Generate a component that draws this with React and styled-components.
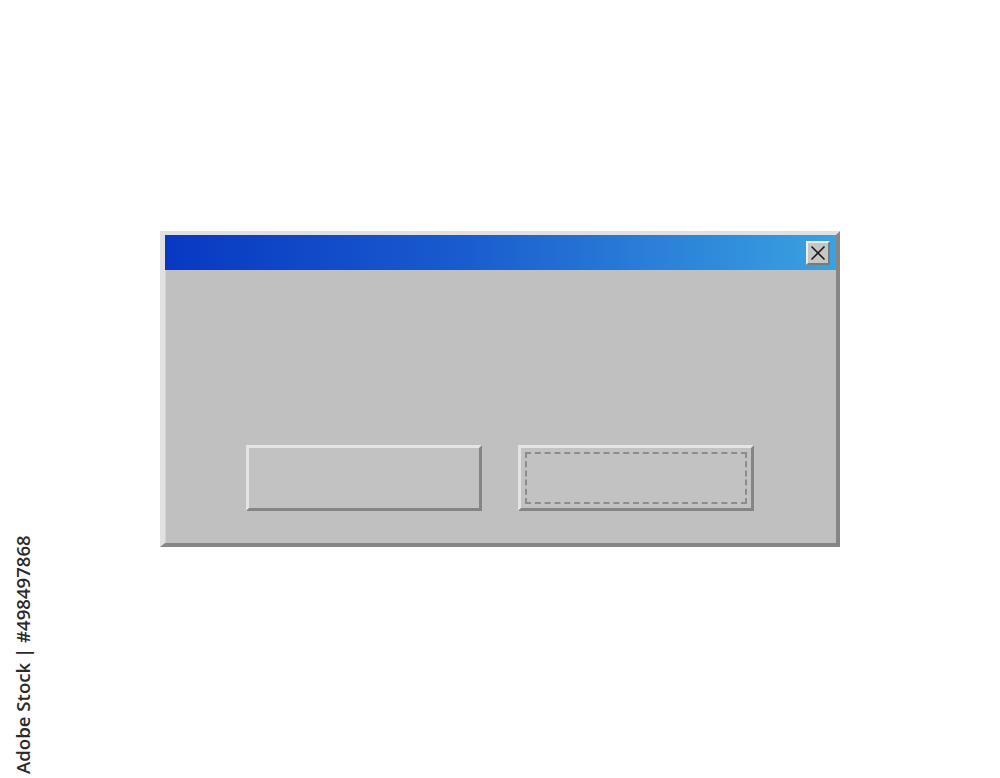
import React from "react";
import styled, { createGlobalStyle } from "styled-components";

const Global = createGlobalStyle`
  html, body {
    margin: 0;
    padding: 0;
    background: #ffffff;
    font-family: "Open Sans", "Liberation Sans", sans-serif;
  }
`;

const Page = styled.div`
  position: relative;
  width: 1000px;
  height: 778px;
  box-sizing: border-box;
  padding: 231px 0 0 160px;
  background: #ffffff;
  overflow: hidden;
`;

const Window = styled.div`
  width: 680px;
  height: 316px;
  box-sizing: border-box;
  display: flex;
  flex-direction: column;
  background: #c0c0c0;
  border-style: solid;
  border-width: 4px 4px 4px 5px;
  border-color: #e1e1e1 #868686 #868686 #e1e1e1;
  box-shadow: inset 1px 1px 0 #d2d2d2;
`;

const TitleBar = styled.div`
  height: 35px;
  flex: none;
  display: flex;
  align-items: flex-start;
  justify-content: flex-end;
  padding: 6px 6px 0 0;
  box-sizing: border-box;
  background: linear-gradient(90deg, #0838c2 0%, #1a5ccf 45%, #3aa2e0 100%);
`;

const CloseButton = styled.button`
  width: 24px;
  height: 24px;
  padding: 0;
  margin: 0;
  display: flex;
  align-items: center;
  justify-content: center;
  background: #c6c6c6;
  border-style: solid;
  border-width: 2px;
  border-color: #ececec #7a7a7a #7a7a7a #ececec;
  box-sizing: border-box;
  cursor: pointer;
`;

const Body = styled.div`
  flex: 1;
  display: flex;
  align-items: flex-end;
  justify-content: center;
  gap: 36px;
  padding: 0 1px 32px 0;
  box-sizing: border-box;
`;

const Button = styled.button`
  width: 236px;
  height: 66px;
  padding: 4px;
  margin: 0;
  box-sizing: border-box;
  background: #c2c2c2;
  border-style: solid;
  border-width: 3px;
  border-color: #e4e4e4 #858585 #858585 #e4e4e4;
  display: flex;
  cursor: pointer;
`;

const FocusRing = styled.span`
  flex: 1;
  border: ${(p) => (p.$visible ? "2px dashed #8c8c8c" : "none")};
`;

const StockId = styled.div`
  position: absolute;
  left: 11px;
  top: 532px;
  height: 242px;
  width: 24px;
  writing-mode: vertical-rl;
  transform: rotate(180deg);
  font-family: "Open Sans", "Liberation Sans", sans-serif;
  font-size: 18.6px;
  font-weight: 600;
  line-height: 24px;
  color: #2a2a2a;
  white-space: nowrap;
  text-align: left;
`;

function CloseGlyph() {
  return (
    <svg width="16" height="16" viewBox="0 0 16 16">
      <path d="M1.5 1.5 L14.5 14.5 M14.5 1.5 L1.5 14.5" stroke="#1a1a1a" strokeWidth="1.6" />
    </svg>
  );
}

export default function App() {
  return (
    <Page>
      <Global />
      <Window>
        <TitleBar>
          <CloseButton aria-label="Close">
            <CloseGlyph />
          </CloseButton>
        </TitleBar>
        <Body>
          <Button>
            <FocusRing />
          </Button>
          <Button>
            <FocusRing $visible />
          </Button>
        </Body>
      </Window>
      <StockId>Adobe Stock | #498497868</StockId>
    </Page>
  );
}
